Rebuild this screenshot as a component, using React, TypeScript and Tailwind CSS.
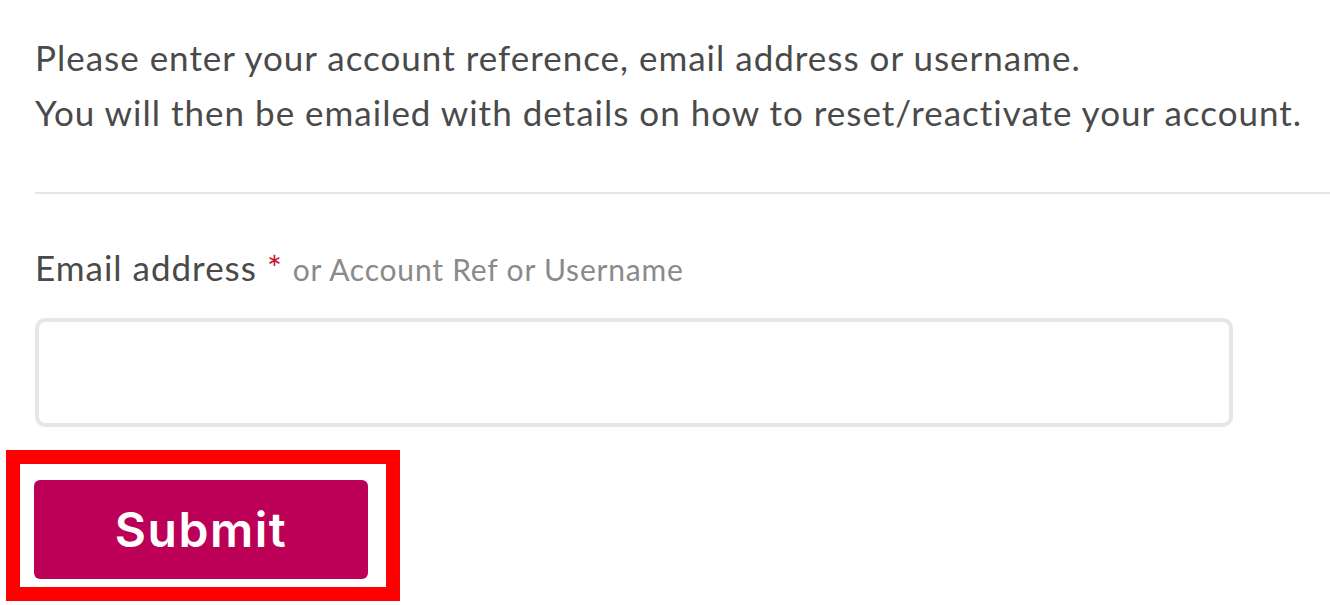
import React from 'react';

const App: React.FC = () => {
  return (
    <div className="min-h-screen bg-white pt-[30px] pl-[35px] font-['Lato','Noto_Sans',sans-serif] text-[#4a4a4a]">
      <div className="text-[35px] leading-[55px] tracking-[1px]">
        <p>Please enter your account reference, email address or username.</p>
        <p>You will then be emailed with details on how to reset/reactivate your account.</p>
      </div>

      <div className="mt-[52px] h-[2px] bg-[#e5e5e5]" />

      <form className="mt-[46px]" onSubmit={(e) => e.preventDefault()}>
        <label htmlFor="email" className="block text-[35px] leading-[55px] tracking-[1px]">
          Email address <span className="text-[#c8102e]">*</span>{' '}
          <span className="text-[30px] tracking-[0.8px] text-[#8a8a8a]">or Account Ref or Username</span>
        </label>
        <input
          id="email"
          type="text"
          className="mt-[21px] block h-[109px] w-[1198px] rounded-[10px] border-4 border-[#e6e6e6] bg-white px-4 text-[33px] outline-none"
        />

        <div className="-ml-[29px] mt-[23px] inline-block border-[14px] border-[#ff0000] pt-[16px] pr-[18px] pb-[8px] pl-[14px]">
          <button
            type="submit"
            className="flex h-[99px] w-[334px] items-center justify-center rounded-[6px] bg-[#bc0058] font-['Inter',sans-serif] text-[48px] font-semibold tracking-[1.5px] text-white"
          >
            Submit
          </button>
        </div>
      </form>
    </div>
  );
};

export default App;
